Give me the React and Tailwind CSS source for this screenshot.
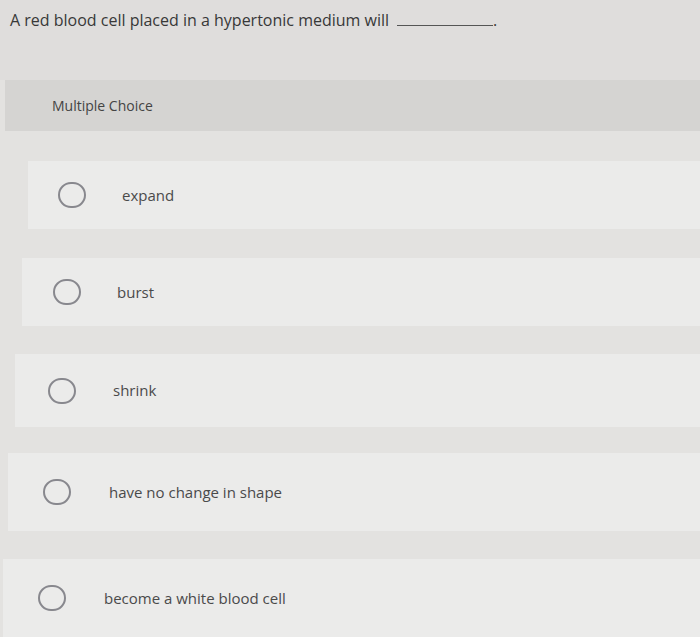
import React from "react";

const rows = [
  { label: "expand", pad: "pl-[28px]", h: "h-[68px]", gap: "mt-[30px]", circle: "ml-[30px]", text: "ml-[36px]" },
  { label: "burst", pad: "pl-[22px]", h: "h-[68px]", gap: "mt-[29px]", circle: "ml-[31px]", text: "ml-[36px]" },
  { label: "shrink", pad: "pl-[15px]", h: "h-[73px]", gap: "mt-[28px]", circle: "ml-[33px]", text: "ml-[37px]" },
  { label: "have no change in shape", pad: "pl-[8px]", h: "h-[78px]", gap: "mt-[26px]", circle: "ml-[35px]", text: "ml-[38px]" },
  { label: "become a white blood cell", pad: "pl-[3px]", h: "h-[78px]", gap: "mt-[28px]", circle: "ml-[35px]", text: "ml-[38px]" },
];

export default function App() {
  return (
    <div
      className="w-[700px] h-[637px] overflow-hidden bg-[#e3e2e0]"
      style={{ fontFamily: "'Open Sans', Lato, sans-serif" }}
    >
      <div className="bg-[#dfdddc] h-[80px] pt-[9px] pl-[10px]">
        <div className="flex items-end text-[16px] text-[#383838] leading-[22px]">
          <span>A red blood cell placed in a hypertonic medium will</span>
          <span className="ml-[8px] mb-[5px] w-[96px] border-b border-[#555]"></span>
          <span>.</span>
        </div>
      </div>
      <div className="ml-[5px] h-[51px] bg-[#d5d4d2] flex items-center pl-[47px]">
        <span className="text-[14px] text-[#444]">Multiple Choice</span>
      </div>
      <div className="flex flex-col">
        {rows.map((r, i) => (
          <div key={i} className={`${r.gap} ${r.pad}`}>
            <div className={`${r.h} bg-[#ebebea] flex items-center`}>
              <span className={`${r.circle} w-[28px] h-[26px] rounded-full border-2 border-[#88888e] shrink-0`}></span>
              <span className={`${r.text} text-[15px] font-medium text-[#4a4a4a]`}>{r.label}</span>
            </div>
          </div>
        ))}
      </div>
    </div>
  );
}
